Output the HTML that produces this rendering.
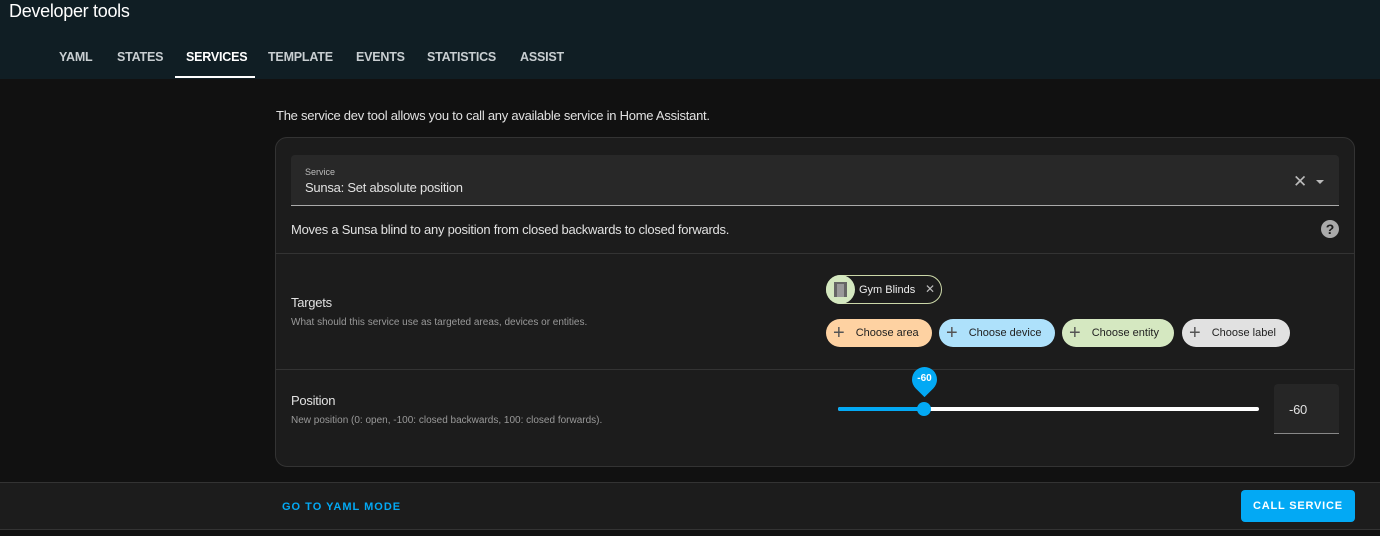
<html><head><style>
*{margin:0;padding:0;box-sizing:border-box}
body{width:1380px;height:536px;background:#111;font-family:"Liberation Sans",sans-serif;color:#e1e1e1;position:relative;overflow:hidden}
.a{position:absolute}
.hdr{left:0;top:0;width:1380px;height:79px;background:#101e24}
.tab{top:50px;font-size:12.5px;font-weight:bold;color:#c8ced1;letter-spacing:-.2px}
.t{font-size:13px;letter-spacing:-.25px}
.chip{height:28px;border-radius:14px;font-size:11px;color:#222;display:flex;align-items:center;padding-left:7px}
.chip b{font-weight:normal;font-size:20px;color:#555;margin-right:11px;line-height:1}
</style></head><body>
<div class="a hdr"></div>
<div class="a" style="left:9px;top:1px;font-size:18px;color:#fff;letter-spacing:-.3px">Developer tools</div>
<div class="a tab" style="left:59px">YAML</div>
<div class="a tab" style="left:117px">STATES</div>
<div class="a tab" style="left:186px;color:#fff">SERVICES</div>
<div class="a" style="left:175px;top:76px;width:80px;height:2px;background:#fff"></div>
<div class="a tab" style="left:268px">TEMPLATE</div>
<div class="a tab" style="left:356px">EVENTS</div>
<div class="a tab" style="left:427px">STATISTICS</div>
<div class="a tab" style="left:520px">ASSIST</div>
<div class="a t" style="left:276px;top:108px">The service dev tool allows you to call any available service in Home Assistant.</div>
<div class="a" style="left:275px;top:137px;width:1080px;height:330px;background:#1c1c1c;border:1px solid #333;border-radius:12px"></div>
<div class="a" style="left:291px;top:155px;width:1048px;height:51px;background:#282828;border-radius:4px 4px 0 0;border-bottom:1px solid #aaa"></div>
<div class="a" style="left:305px;top:167px;font-size:9px;color:#bbb">Service</div>
<div class="a t" style="left:305px;top:180px">Sunsa: Set absolute position</div>
<div class="a" style="left:1293px;top:172px;font-size:17px;color:#bbb">✕</div>
<div class="a" style="left:1316px;top:180px;width:0;height:0;border-left:4px solid transparent;border-right:4px solid transparent;border-top:4px solid #bbb"></div>
<div class="a t" style="left:291px;top:222px">Moves a Sunsa blind to any position from closed backwards to closed forwards.</div>
<div class="a" style="left:1321px;top:220px;width:18px;height:18px;border-radius:50%;background:#aaa;color:#1c1c1c;font-weight:bold;font-size:14px;text-align:center;line-height:18px">?</div>
<div class="a" style="left:276px;top:253px;width:1078px;height:1px;background:#333"></div>
<div class="a t" style="left:291px;top:295px">Targets</div>
<div class="a" style="left:291px;top:317px;font-size:10px;color:#999">What should this service use as targeted areas, devices or entities.</div>
<div class="a" style="left:826px;top:275px;width:116px;height:29px;border:1px solid #cbd7a8;border-radius:15px"></div>
<div class="a" style="left:826px;top:275px;width:29px;height:29px;border-radius:50%;background:#d4e8c0"></div>
<div class="a" style="left:834px;top:282px;width:13px;height:15px;background:#999;border:3px solid #666;border-top-width:2px;border-bottom:none"></div>
<div class="a" style="left:859px;top:284px;font-size:11px;color:#eee">Gym Blinds</div>
<div class="a" style="left:925px;top:282px;font-size:12px;color:#bbb">✕</div>
<div class="a chip" style="left:826px;top:319px;width:106px;background:#fed2a2"><b>+</b>Choose area</div>
<div class="a chip" style="left:939px;top:319px;width:116px;background:#aee1fb"><b>+</b>Choose device</div>
<div class="a chip" style="left:1062px;top:319px;width:112px;background:#d5e8c1"><b>+</b>Choose entity</div>
<div class="a chip" style="left:1182px;top:319px;width:108px;background:#e1e1e1"><b>+</b>Choose label</div>
<div class="a" style="left:276px;top:369px;width:1078px;height:1px;background:#333"></div>
<div class="a t" style="left:291px;top:393px">Position</div>
<div class="a" style="left:291px;top:415px;font-size:10px;color:#999">New position (0: open, -100: closed backwards, 100: closed forwards).</div>
<div class="a" style="left:838px;top:407px;width:421px;height:4px;background:#fff;border-radius:2px"></div>
<div class="a" style="left:838px;top:407px;width:86px;height:4px;background:#03a9f4;border-radius:2px"></div>
<div class="a" style="left:917px;top:402px;width:14px;height:14px;border-radius:50%;background:#03a9f4"></div>
<div class="a" style="left:912px;top:367px;width:25px;height:25px;border-radius:50% 50% 50% 0;transform:rotate(-45deg);background:#03a9f4"></div>
<div class="a" style="left:912px;top:373px;width:25px;text-align:center;font-size:10px;font-weight:bold;color:#fff">-60</div>
<div class="a" style="left:1274px;top:384px;width:65px;height:50px;background:#262626;border-radius:4px 4px 0 0;border-bottom:1px solid #888"></div>
<div class="a t" style="left:1289px;top:402px">-60</div>
<div class="a" style="left:0;top:482px;width:1380px;height:48px;background:#1c1c1c;border-top:1px solid #333;border-bottom:1px solid #333"></div>
<div class="a" style="left:282px;top:501px;font-size:11px;font-weight:bold;color:#03a9f4;letter-spacing:1px">GO TO YAML MODE</div>
<div class="a" style="left:1241px;top:490px;width:114px;height:32px;background:#03a9f4;border-radius:4px;color:#fff;font-size:11px;font-weight:bold;letter-spacing:.8px;text-align:center;line-height:32px">CALL SERVICE</div>
</body></html>
